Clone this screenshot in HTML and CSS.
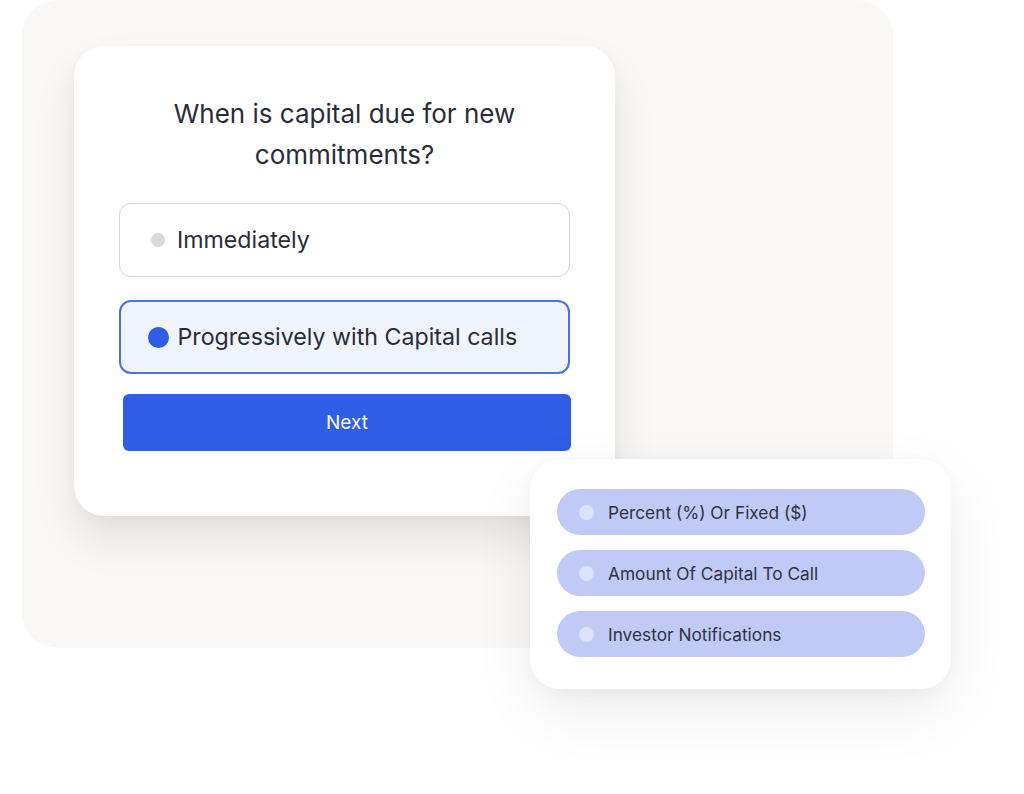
FILE: index.html
```html
<!DOCTYPE html>
<html lang="en">
<head>
<meta charset="utf-8">
<title>Capital calls</title>
<link rel="stylesheet" href="styles.css">
</head>
<body>
<div class="stage">
  <div class="backdrop"></div>
  <section class="card question-card">
    <h2 class="question">When is capital due for new commitments?</h2>
    <div class="options">
      <div class="option">
        <span class="dot-wrap"><span class="dot dot-off"></span></span>
        <span class="option-label">Immediately</span>
      </div>
      <div class="option option-selected">
        <span class="dot-wrap"><span class="dot dot-on"></span></span>
        <span class="option-label">Progressively with Capital calls</span>
      </div>
    </div>
    <button class="next-btn" type="button">Next</button>
  </section>
  <section class="card steps-card">
    <div class="pill"><span class="pill-dot"></span><span class="pill-label">Percent (%) Or Fixed ($)</span></div>
    <div class="pill"><span class="pill-dot"></span><span class="pill-label">Amount Of Capital To Call</span></div>
    <div class="pill"><span class="pill-dot"></span><span class="pill-label">Investor Notifications</span></div>
  </section>
</div>
</body>
</html>
```
FILE: styles.css
```css
* { box-sizing: border-box; }
html, body { margin: 0; padding: 0; background: #ffffff; }
body {
  font-family: Inter, "Noto Sans", "Liberation Sans", sans-serif;
  color: #2a2c39;
}
.stage {
  position: relative;
  width: 1024px;
  height: 794px;
  overflow: hidden;
  background: #ffffff;
}
.backdrop {
  position: absolute;
  left: 22px;
  top: 0;
  width: 871px;
  height: 648px;
  border-radius: 36px;
  background: #f9f8f6;
}
.card {
  position: absolute;
  background: #ffffff;
  border-radius: 30px;
}
.question-card {
  left: 74px;
  top: 46px;
  width: 541px;
  height: 470px;
  padding: 47px 45px 0 45px;
  display: flex;
  flex-direction: column;
  box-shadow: 0 24px 44px rgba(0, 0, 0, 0.09), 0 4px 14px rgba(0, 0, 0, 0.03);
}
.question {
  margin: 0;
  font-size: 26px;
  font-weight: 400;
  line-height: 41px;
  text-align: center;
  color: #2a2c39;
  padding: 0 48px;
}
.options {
  margin-top: 28px;
  display: flex;
  flex-direction: column;
  gap: 23px;
}
.option {
  height: 74px;
  border: 1.5px solid #d6d6d6;
  border-radius: 12px;
  display: flex;
  align-items: center;
  padding-left: 27px;
  gap: 8px;
  background: #ffffff;
}
.option-selected {
  background: #f0f4fd;
  border: 2px solid #4a70ea;
  padding-left: 26.5px;
}
.dot-wrap {
  width: 22px;
  height: 22px;
  display: flex;
  align-items: center;
  justify-content: center;
}
.dot { border-radius: 50%; display: block; }
.dot-off { width: 14px; height: 14px; background: #d9d9d9; }
.dot-on { width: 21px; height: 21px; background: #2f5de8; }
.option-label {
  font-size: 23.2px;
  line-height: 1;
  padding-top: 2px;
  color: #2a2c39;
}
.next-btn {
  margin: 20px 0 0 4px;
  width: 448px;
  height: 57px;
  border: none;
  border-radius: 6px;
  background: #305de8;
  color: #ffffff;
  font-family: inherit;
  font-size: 19px;
  font-weight: 400;
  padding: 0;
}
.steps-card {
  left: 530px;
  top: 459px;
  width: 421px;
  height: 230px;
  padding: 30px 26px 0 27px;
  display: flex;
  flex-direction: column;
  gap: 15px;
  box-shadow: 0 22px 60px rgba(0, 0, 0, 0.08), 0 4px 16px rgba(0, 0, 0, 0.03);
}
.pill {
  height: 46px;
  border-radius: 23px;
  background: #bfcbf6;
  display: flex;
  align-items: center;
  padding-left: 22px;
  gap: 14px;
}
.pill-dot {
  width: 15px;
  height: 15px;
  border-radius: 50%;
  background: #dbe2fa;
  flex: none;
}
.pill-label {
  font-size: 17.3px;
  color: #2f3140;
}
```
